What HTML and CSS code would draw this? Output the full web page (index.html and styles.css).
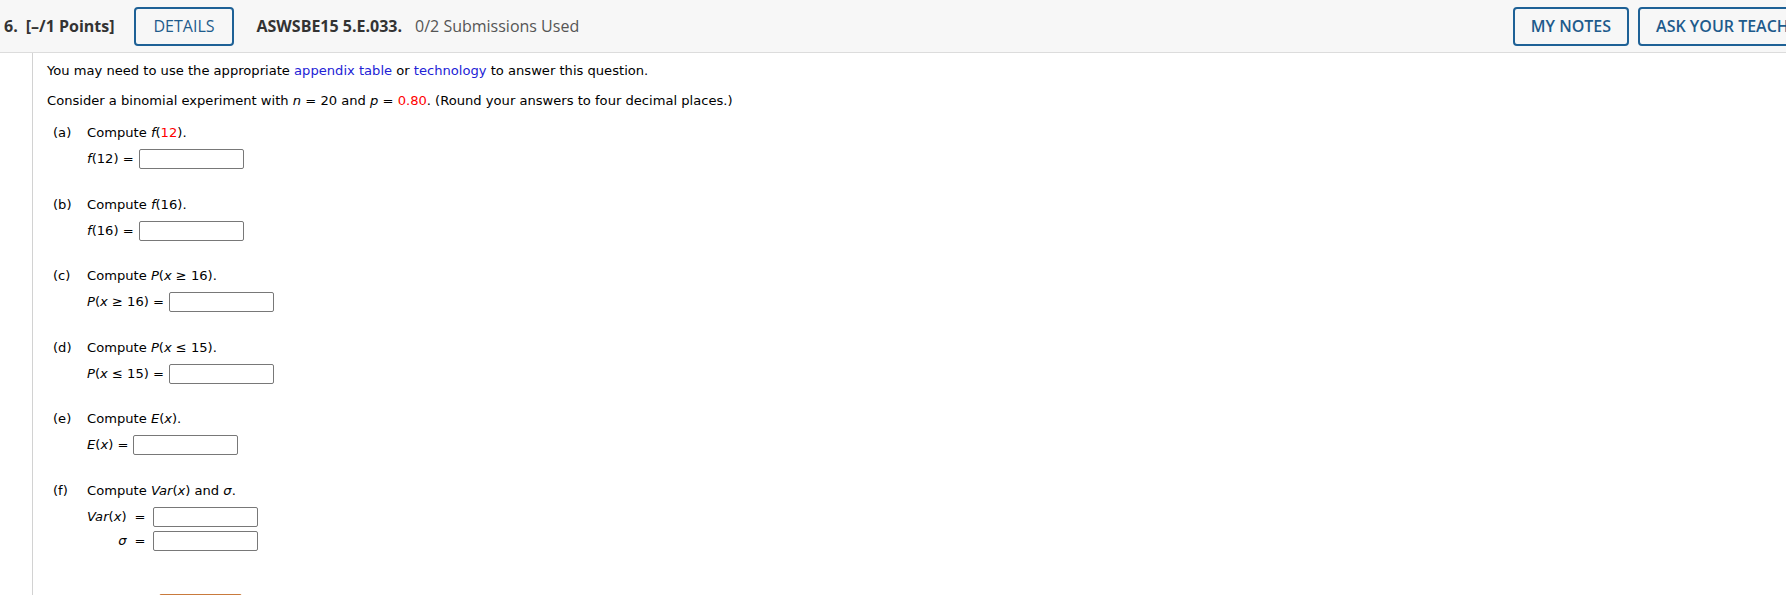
FILE: index.html
```html
<!DOCTYPE html>
<html>
<head>
<meta charset="utf-8">
<link rel="stylesheet" href="styles.css">
</head>
<body>
<div class="header">
  <div class="left">
    <span class="qnum">6.</span>
    <span class="points">[–/1 Points]</span>
    <button class="btn btn-details">DETAILS</button>
    <span class="qid">ASWSBE15 5.E.033.</span>
    <span class="subs">0/2 Submissions Used</span>
  </div>
  <div class="right">
    <button class="btn btn-strong">MY NOTES</button>
    <button class="btn btn-strong">ASK YOUR TEACHER</button>
  </div>
</div>
<div class="content">
  <p class="intro">You may need to use the appropriate <span class="link">appendix table</span> or <span class="link">technology</span> to answer this question.</p>
  <p class="intro second">Consider a binomial experiment with <i>n</i> = 20 and <i>p</i> = <span class="red">0.80</span>. (Round your answers to four decimal places.)</p>

  <div class="part first">
    <span class="plabel">(a)</span>
    <div class="pbody">
      <div class="q">Compute <i>f</i>(<span class="red">12</span>).</div>
      <div class="ans"><span><i>f</i>(12) =</span><span class="box"></span></div>
    </div>
  </div>

  <div class="part">
    <span class="plabel">(b)</span>
    <div class="pbody">
      <div class="q">Compute <i>f</i>(16).</div>
      <div class="ans"><span><i>f</i>(16) =</span><span class="box"></span></div>
    </div>
  </div>

  <div class="part">
    <span class="plabel">(c)</span>
    <div class="pbody">
      <div class="q">Compute <i>P</i>(<i>x</i> ≥ 16).</div>
      <div class="ans"><span><i>P</i>(<i>x</i> ≥ 16) =</span><span class="box"></span></div>
    </div>
  </div>

  <div class="part">
    <span class="plabel">(d)</span>
    <div class="pbody">
      <div class="q">Compute <i>P</i>(<i>x</i> ≤ 15).</div>
      <div class="ans"><span><i>P</i>(<i>x</i> ≤ 15) =</span><span class="box"></span></div>
    </div>
  </div>

  <div class="part">
    <span class="plabel">(e)</span>
    <div class="pbody">
      <div class="q">Compute <i>E</i>(<i>x</i>).</div>
      <div class="ans"><span><i>E</i>(<i>x</i>) =</span><span class="box"></span></div>
    </div>
  </div>

  <div class="part">
    <span class="plabel">(f)</span>
    <div class="pbody">
      <div class="q">Compute <i>Var</i>(<i>x</i>) and <i>σ</i>.</div>
      <div class="vtable">
        <span class="vname"><i>Var</i>(<i>x</i>)</span><span class="eq">=</span><span class="box"></span>
        <span class="vname"><i>σ</i></span><span class="eq">=</span><span class="box"></span>
      </div>
    </div>
  </div>

  <div class="submit-row"><button class="submit">Submit Answer</button></div>
</div>
</body>
</html>
```
FILE: styles.css
```css
html, body {
  margin: 0;
  padding: 0;
  overflow: hidden;
  background: #fff;
}
body {
  width: 1786px;
  height: 595px;
}
.header {
  width: 1826px;
  height: 53px;
  box-sizing: border-box;
  background: #f7f7f7;
  border-bottom: 1px solid #dcdcdc;
  display: flex;
  align-items: center;
  justify-content: space-between;
  padding-left: 4px;
  font-family: "Open Sans", sans-serif;
  font-size: 16px;
  color: #333;
  white-space: nowrap;
}
.left, .right {
  display: flex;
  align-items: center;
}
.qnum { font-weight: 700; }
.points { font-weight: 700; margin-left: 8px; }
.btn {
  font-family: "Open Sans", sans-serif;
  font-size: 16px;
  height: 39px;
  box-sizing: border-box;
  background: transparent;
  border: 2px solid #1e6196;
  border-radius: 4px;
  color: #1e5b8c;
  padding: 0 16px;
  display: flex;
  align-items: center;
}
.btn-details { margin-left: 20px; font-weight: 400; padding: 0 17px; }
.qid { font-weight: 700; margin-left: 23px; }
.subs { margin-left: 13px; color: #555; }
.right { gap: 9px; }
.btn-strong { font-weight: 600; padding: 0 16px; }

.content {
  margin-left: 32px;
  border-left: 1px solid #d2d2d2;
  padding-left: 14px;
  padding-top: 10px;
  height: 600px;
  font-family: "DejaVu Sans", Verdana, sans-serif;
  font-size: 13.1px;
  line-height: 16px;
  color: #000;
}
.content i { font-style: italic; }
.intro { margin: 0; }
.intro.second { margin-top: 14px; }
.link { color: #2222d6; }
.red { color: #ff0000; }

.part {
  display: flex;
  margin-top: 27.5px;
}
.part.first { margin-top: 16px; }
.plabel {
  width: 40px;
  padding-left: 6px;
  box-sizing: border-box;
}
.q { height: 16px; }
.ans {
  margin-top: 8px;
  display: flex;
  align-items: center;
  gap: 5px;
  height: 20px;
}
.box {
  display: inline-block;
  width: 105px;
  height: 20px;
  box-sizing: border-box;
  border: 1px solid #787878;
  border-radius: 2px;
  background: #fff;
}
.vtable {
  margin-top: 8px;
  display: grid;
  grid-template-columns: auto auto 105px;
  grid-auto-rows: 20px;
  row-gap: 4px;
  column-gap: 6px;
  align-items: center;
  width: max-content;
}
.vname { text-align: right; }
.eq { padding: 0 2px; }
.submit-row {
  padding-left: 112px;
  margin-top: 43px;
}
.submit {
  width: 83px;
  height: 56px;
  padding-top: 26px;
  border: 1px solid #c97a3c;
  border-radius: 2px;
  background: #fff;
  color: #c97a3c;
}
```
